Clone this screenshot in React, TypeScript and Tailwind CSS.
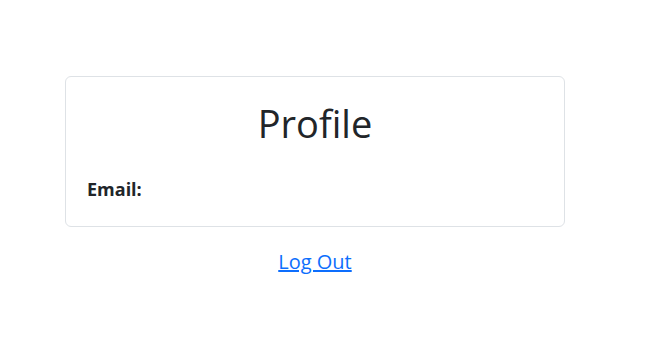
export default function App() {
  return (
    <div className="min-h-screen bg-white pt-[76px] pl-[65px] text-[#212529]" style={{ fontFamily: '"Open Sans", "Noto Sans", sans-serif' }}>
      <div className="w-[500px]">
        <div className="h-[151px] rounded-md border border-[#dee2e6] px-[21px] pt-[18px]">
          <h1 className="text-center text-[38px] font-normal leading-[56px]">Profile</h1>
          <p className="mt-[26px] text-[18px] font-bold leading-[24px]">Email:</p>
        </div>
        <div className="mt-[19px] text-center">
          <a href="#" className="text-[20px] leading-[32px] text-[#0d6efd] underline">Log Out</a>
        </div>
      </div>
    </div>
  );
}
